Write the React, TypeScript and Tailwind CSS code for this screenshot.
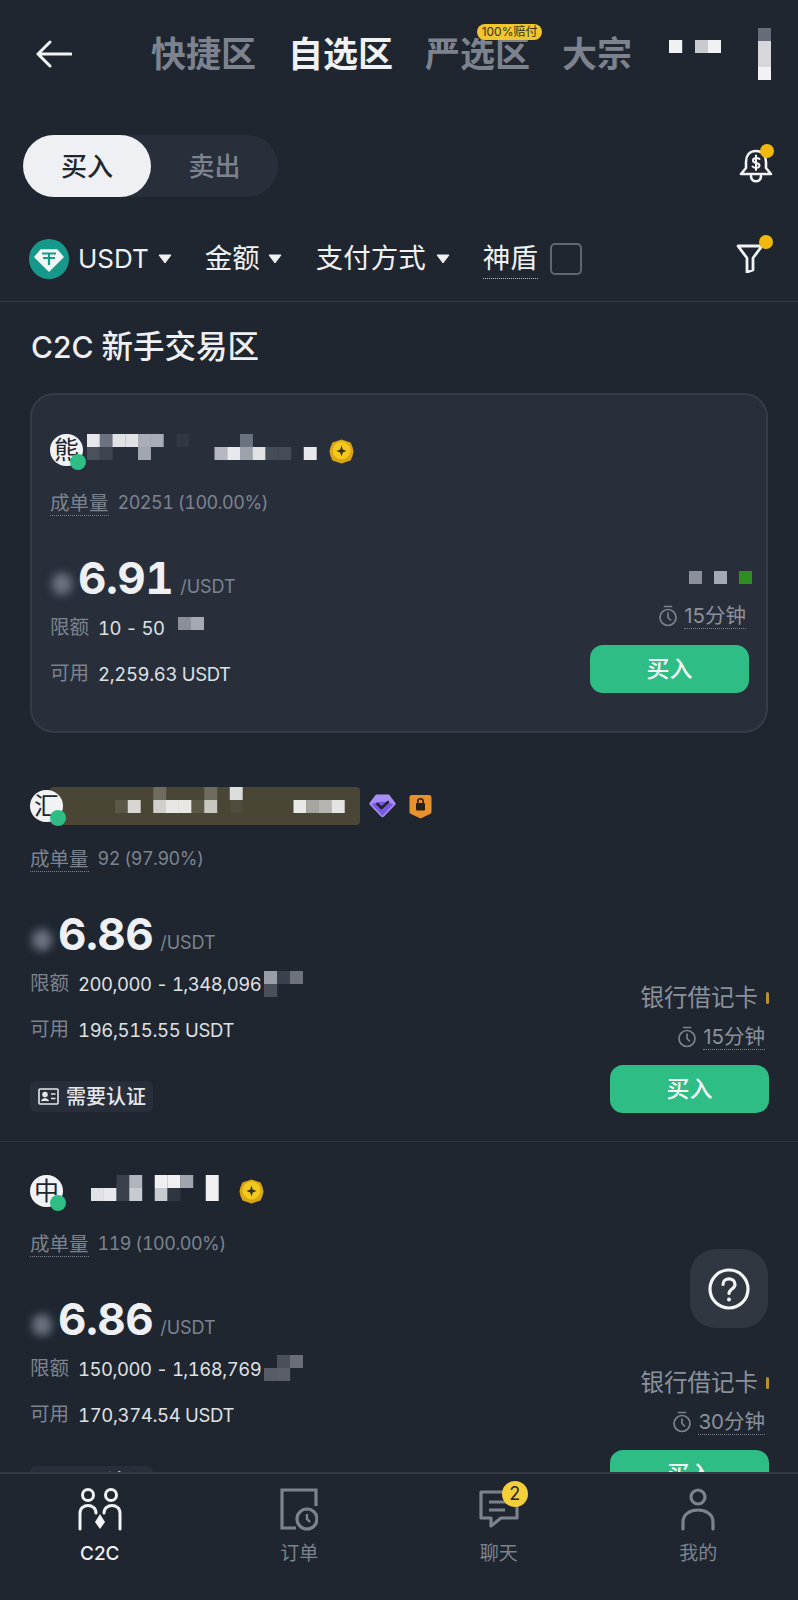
import React from "react";

type Cell = [number, number, string];

function Mosaic({ cols, rows, cells, w = 13, h = 13 }: { cols: number; rows: number; cells: Cell[]; w?: number; h?: number }) {
  return (
    <svg width={cols * w} height={rows * h} viewBox={`0 0 ${cols * w} ${rows * h}`} className="shrink-0 block">
      {cells.map(([x, y, c], i) => (
        <rect key={i} x={x * w} y={y * h} width={w + 0.2} height={h} fill={c} />
      ))}
    </svg>
  );
}

function Avatar({ ch }: { ch: string }) {
  return (
    <div className="relative z-10 w-[33px] h-[32px] shrink-0 rounded-full bg-[#f1f2f4] flex items-center justify-center">
      <span className="text-[25px] leading-none text-[#1e2530]">{ch}</span>
      <span className="absolute right-[-3px] bottom-[-4px] w-[16px] h-[16px] rounded-full bg-[#2ebd85]" />
    </div>
  );
}

function GoldBadge() {
  return (
    <svg width="25" height="25" viewBox="0 0 25 25" className="shrink-0">
      <polygon points="12.5,0.5 17,2 21.5,3.5 23.5,8 24.5,12.5 23.5,17 21.5,21.5 17,23 12.5,24.5 8,23 3.5,21.5 1.5,17 0.5,12.5 1.5,8 3.5,3.5 8,2" fill="#d9a514" />
      <circle cx="12.5" cy="11.5" r="9" fill="#f4c91f" />
      <path d="M12.5 6.5 L13.8 10.4 L17.5 12 L13.8 13.6 L12.5 17.5 L11.2 13.6 L7.5 12 L11.2 10.4 Z" fill="#3b3520" />
    </svg>
  );
}

function PurpleBadge() {
  return (
    <svg width="29" height="26" viewBox="0 0 29 26" className="shrink-0">
      <path d="M8 1.500 H21 L27.500 10 Q28 11 27 12 L16 23.500 Q14.500 25 13 23.500 L2 12 Q1 11 1.500 10 Z" fill="#a98ef8" />
      <path d="M3.500 11 Q14.500 6 25.500 11 L14.500 23 Z" fill="#7a58e6" />
      <path d="M9.500 11 L13.500 15 L20 9" fill="none" stroke="#1f2630" strokeWidth="2.600" strokeLinecap="round" strokeLinejoin="round" />
    </svg>
  );
}

function LockBadge() {
  return (
    <svg width="23" height="25" viewBox="0 0 23 25" className="shrink-0">
      <path d="M3 1 H20 Q22.500 1 22.500 3.500 V18 Q22.500 19.500 21 20 L11.500 24.500 L2 20 Q0.500 19.500 0.500 18 V3.500 Q0.500 1 3 1 Z" fill="#e8912d" />
      <rect x="7" y="9" width="9" height="7.500" rx="1" fill="#2a2118" />
      <path d="M8.800 9 V7.500 a2.700 2.700 0 0 1 5.400 0 V9" fill="none" stroke="#2a2118" strokeWidth="1.600" />
    </svg>
  );
}

function Clock({ size = 20 }: { size?: number }) {
  return (
    <svg width={size} height={size + 2} viewBox="0 0 20 22" fill="none" stroke="#7d838e" strokeWidth="1.700" strokeLinecap="round" className="shrink-0">
      <circle cx="10" cy="12.500" r="8" />
      <path d="M6.500 1.500 H13.500" />
      <path d="M10 8 V12.500 L12.500 15" />
    </svg>
  );
}

function BuyButton({ w }: { w: string }) {
  return (
    <div className={`${w} h-[48px] rounded-[13px] bg-[#2ebd85] flex items-center justify-center text-[23px] font-medium text-[#f4f6f5]`}>
      买入
    </div>
  );
}

function TimeRow({ t, mr }: { t: string; mr: string }) {
  return (
    <div className={`flex items-center gap-[6px] h-[26px] ${mr}`}>
      <Clock />
      <span className="text-[20.5px] leading-[25px] h-[26px] text-[#8b919b] border-b border-dotted border-[#7d838e]">{t}</span>
    </div>
  );
}

function Tag() {
  return (
    <div className="mt-[39px] w-[123px] h-[31px] rounded-[6px] bg-[#282f3b] flex items-center pl-[8px] gap-[7px]">
      <svg width="21" height="17" viewBox="0 0 21 17" fill="none" stroke="#e5e7eb" strokeWidth="1.600" className="shrink-0">
        <rect x="1" y="1" width="19" height="15" rx="1" />
        <circle cx="7" cy="6.500" r="2" fill="#e5e7eb" />
        <path d="M3.500 13 Q7 8.500 10.500 13" fill="#e5e7eb" />
        <path d="M13 6 H17.500 M13 10.500 H17.500" />
      </svg>
      <span className="text-[20px] leading-none font-medium text-[#e5e7eb] whitespace-nowrap">需要认证</span>
    </div>
  );
}

type LeftProps = {
  head: React.ReactNode;
  stats: string;
  price: string;
  limit: React.ReactNode;
  avail: string;
  tag?: boolean;
};

function Left({ head, stats, price, limit, avail, tag }: LeftProps) {
  return (
    <div className="flex flex-col">
      <div className="flex h-[32px]">{head}</div>
      <div className="mt-[25px] h-[25px] flex items-start gap-[9px] text-[#7d838e]">
        <span className="text-[19.5px] leading-[24px] h-[25px] border-b border-dotted border-[#7d838e]">成单量</span>
        <span className="text-[18px] leading-[24px] tabular-nums tracking-[-0.5px]">{stats}</span>
      </div>
      <div className="mt-[38px] h-[48px] flex items-center">
        <span className="ml-[2px] w-[20px] h-[22px] mt-[12px] mr-[6px] rounded-full bg-[#6d7280] blur-[4px]" />
        <span className="text-[44px] leading-none font-bold text-[#eef0f3] tracking-[-0.5px] tabular-nums">{price}</span>
        <span className="ml-[7px] mt-[17px] text-[18px] leading-none text-[#7d838e]">/USDT</span>
      </div>
      <div className="mt-[14px] h-[24px] flex items-center">
        <span className="text-[19.5px] leading-none text-[#7d838e] w-[48px]">限额</span>
        {limit}
      </div>
      <div className="mt-[22px] h-[24px] flex items-center">
        <span className="text-[19.5px] leading-none text-[#7d838e] w-[48px]">可用</span>
        <span className="text-[18.5px] leading-none text-[#dfe1e5] tabular-nums tracking-[-0.35px]">{avail}</span>
      </div>
      {tag && <Tag />}
    </div>
  );
}

function PayRight({ t }: { t: string }) {
  return (
    <div className="flex flex-col items-end -mb-[1px]">
      <div className="h-[24px] flex items-center gap-[8px]">
        <span className="text-[23.5px] leading-none text-[#8b919b]">银行借记卡</span>
        <span className="w-[3px] h-[12px] rounded-full bg-[#b5952a]" />
      </div>
      <div className="mt-[14px]">
        <TimeRow t={t} mr="mr-[4px]" />
      </div>
      <div className="mt-[15px]">
        <BuyButton w="w-[159px]" />
      </div>
    </div>
  );
}

function LimitText({ t }: { t: string }) {
  return <span className="text-[18.5px] leading-none text-[#dfe1e5] whitespace-nowrap tabular-nums tracking-[-0.5px]">{t}</span>;
}

function Tether() {
  return (
    <svg width="40" height="40" viewBox="0 0 40 40" className="shrink-0">
      <circle cx="20" cy="20" r="20" fill="#16998a" />
      <path d="M12 11 H28 L34 18 L20 32 L6 18 Z" fill="#f2f5f4" strokeLinejoin="round" stroke="#f2f5f4" strokeWidth="1.500" />
      <path d="M13 14.500 H27 M20 14.500 V26 M14 19 H26" fill="none" stroke="#16998a" strokeWidth="2.200" />
    </svg>
  );
}

function Caret() {
  return (
    <svg width="14" height="10" viewBox="0 0 14 10" className="shrink-0">
      <path d="M1 1 H13 L7 9 Z" fill="#f0f1f3" stroke="#f0f1f3" strokeLinejoin="round" />
    </svg>
  );
}

function NavItem({ label, active, icon }: { label: string; active?: boolean; icon: React.ReactNode }) {
  return (
    <div className="flex-1 flex flex-col items-center pt-[13px]">
      <div className="h-[44px] flex items-center justify-center">{icon}</div>
      <span className={`mt-[11px] text-[19px] leading-[24px] ${active ? "text-[#eef0f3] font-medium" : "text-[#7d838e]"}`}>{label}</span>
    </div>
  );
}

export default function App() {
  return (
    <div className="relative w-[798px] h-[1600px] overflow-hidden flex flex-col bg-[#1f2630] font-[Inter,'Noto_Sans_CJK_SC',sans-serif]">
      {/* header tabs */}
      <div className="h-[108px] shrink-0 flex items-center pl-[36px]">
        <svg width="36" height="28" viewBox="0 0 36 28" fill="none" stroke="#f2f3f5" strokeWidth="3" strokeLinecap="round" strokeLinejoin="round" className="shrink-0">
          <path d="M2 14 H35 M14 2 L2 14 L14 26" />
        </svg>
        <div className="ml-[79px] flex items-center gap-[32px] text-[35px] leading-none font-semibold text-[#7d838e] whitespace-nowrap">
          <span>快捷区</span>
          <span className="text-[#f0f1f3]">自选区</span>
          <span className="relative">
            严选区
            <span className="absolute left-[52px] top-[-13px] w-[65px] h-[16px] rounded-full bg-[#f0c52e] text-[#3a3216] text-[12px] leading-[16px] font-normal text-center">100%赔付</span>
          </span>
          <span>大宗</span>
        </div>
        <div className="ml-[37px] -mt-[16px]">
          <Mosaic cols={4} rows={1} cells={[[0, 0, "#f0f1f3"], [2, 0, "#c8cad0"], [3, 0, "#f0f1f3"]]} />
        </div>
        <div className="ml-[37px]">
          <Mosaic cols={1} rows={4} cells={[[0, 0, "#666c78"], [0, 1, "#d5d7db"], [0, 2, "#d5d7db"], [0, 3, "#f2f2f4"]]} />
        </div>
      </div>

      {/* buy sell toggle */}
      <div className="mt-[27px] h-[62px] shrink-0 flex items-center justify-between pl-[23px] pr-[25px]">
        <div className="flex w-[255px] h-[62px] rounded-full bg-[#282f3b]">
          <div className="w-[128px] h-[62px] rounded-full bg-[#eef0f3] flex items-center justify-center text-[26px] font-medium text-[#1f2630]">买入</div>
          <div className="flex-1 flex items-center justify-center text-[26px] font-medium text-[#7d838e]">卖出</div>
        </div>
        <div className="relative w-[34px] h-[34px]">
          <svg width="34" height="34" viewBox="0 0 34 34" fill="none" stroke="#f2f3f5" strokeWidth="2.600" strokeLinejoin="round" strokeLinecap="round">
            <path d="M17 2 C10 2 7 7 7 13 V19 L2 25 H32 L27 19 V13 C27 7 24 2 17 2 Z" />
            <path d="M12 27 C12 34 22 34 22 27" />
            <path d="M20.500 10 C19 8.500 14 8.500 14 11.500 C14 15 20.500 13 20.500 16.500 C20.500 19.500 15 19.500 13.500 17.500 M17 6.500 V21" strokeWidth="2" />
          </svg>
          <span className="absolute right-[-1px] top-[-5px] w-[14px] h-[14px] rounded-full bg-[#f0b90b]" />
        </div>
      </div>

      {/* filter row */}
      <div className="shrink-0 h-[105px] pt-[42px] pl-[29px] pr-[34px] flex items-start justify-between border-b border-[#343b47]">
        <div className="flex items-center h-[40px] text-[27.5px] leading-none text-[#f0f1f3] whitespace-nowrap">
          <Tether />
          <span className="ml-[9px] text-[26px]">USDT</span>
          <span className="ml-[9px]"><Caret /></span>
          <span className="ml-[33px]">金额</span>
          <span className="ml-[8px]"><Caret /></span>
          <span className="ml-[34px]">支付方式</span>
          <span className="ml-[10px]"><Caret /></span>
          <span className="ml-[33px] h-[40px] leading-[38px] border-b border-dotted border-[#b8bcc4]">神盾</span>
          <span className="ml-[12px] w-[32px] h-[32px] rounded-[5px] border-2 border-[#5f6672]" />
        </div>
        <div className="relative w-[28px] h-[29px] mt-[5px]">
          <svg width="28" height="29" viewBox="0 0 28 29" fill="none" stroke="#f2f3f5" strokeWidth="2.800" strokeLinejoin="round">
            <path d="M2 2 H26 L17 14 V26 L11 28 V14 Z" />
          </svg>
          <span className="absolute right-[-9px] top-[-9px] w-[14px] h-[14px] rounded-full bg-[#f0b90b]" />
        </div>
      </div>

      {/* list */}
      <div className="flex-1 min-h-0 overflow-hidden">
        <h2 className="mt-[25px] h-[40px] pl-[31px] flex items-center gap-[8px] text-[30px] leading-none font-medium text-[#eef0f3]">
          <span>C2C</span>
          <span className="text-[31.5px]">新手交易区</span>
        </h2>

        <div className="mt-[26px] mx-[30px] h-[340px] rounded-[24px] bg-[#282f3b] border-2 border-[#353c48] pl-[18px] pr-[17px] pt-[40px] pb-[45px] flex justify-between items-end">
          <Left
            head={
              <>
                <Avatar ch="熊" />
                <div className="ml-[4px]">
                  <Mosaic
                    cols={18}
                    rows={2}
                    w={12.75}
                    cells={[
                      [0, 0, "#e5e7eb"], [1, 0, "#6b7280"], [2, 0, "#e0e2e6"], [3, 0, "#e0e2e6"], [4, 0, "#a8adb6"], [5, 0, "#a8adb6"],
                      [7, 0, "#313843"], [12, 0, "#6b7280"],
                      [0, 1, "#4a505c"], [1, 1, "#3e4450"], [4, 1, "#a0a5ae"],
                      [10, 1, "#b5b8c0"], [11, 1, "#e8e9ec"], [12, 1, "#9ea2ab"], [13, 1, "#e0e2e6"], [14, 1, "#454b57"], [15, 1, "#454b57"], [17, 1, "#e8e9ec"],
                    ]}
                  />
                </div>
                <div className="ml-[12px] self-center mt-[2px]">
                  <GoldBadge />
                </div>
              </>
            }
            stats="20251 (100.00%)"
            price="6.91"
            limit={
              <div className="flex items-center h-[24px]">
                <LimitText t="10 - 50" />
                <div className="ml-[14px] self-start mt-[1px]">
                  <Mosaic cols={2} rows={1} cells={[[0, 0, "#8a8f98"], [1, 0, "#a5a9b1"]]} />
                </div>
              </div>
            }
            avail="2,259.63 USDT"
          />
          <div className="flex flex-col items-end -mb-[7px]">
            <div className="flex gap-[12px] -mr-[3px]">
              <span className="w-[13px] h-[13px] bg-[#8a8f9a]" />
              <span className="w-[13px] h-[13px] bg-[#a5a9b3]" />
              <span className="w-[13px] h-[13px] bg-[#2f8f1e]" />
            </div>
            <div className="mt-[19px]">
              <TimeRow t="15分钟" mr="mr-[3px]" />
            </div>
            <div className="mt-[16px]">
              <BuyButton w="w-[159px]" />
            </div>
          </div>
        </div>

        <div className="mt-[57px] pl-[30px] pr-[29px] pb-[29px] flex justify-between items-end border-b border-[#2a313c]">
          <Left
            head={
              <div className="flex items-center h-[32px]">
                <Avatar ch="汇" />
                <div className="-ml-[13px] w-[310px] h-[38px] rounded-[4px] bg-[#4a4636] pl-[65px] shrink-0">
                  <Mosaic
                    cols={18}
                    rows={2}
                    w={12.75}
                    cells={[
                      [3, 0, "#6e6b5f"], [7, 0, "#6e6b5f"], [9, 0, "#dcdcda"],
                      [0, 1, "#5c5848"], [1, 1, "#d8d6d0"], [3, 1, "#d0cfc9"], [4, 1, "#e8e7e3"], [5, 1, "#e8e7e3"], [6, 1, "#5c5848"], [7, 1, "#c8c7c0"], [9, 1, "#4f4c3e"],
                      [14, 1, "#e8e8e6"], [15, 1, "#a6a59f"], [16, 1, "#b5b4ae"], [17, 1, "#e4e4e2"],
                    ]}
                  />
                </div>
                <div className="ml-[8px]"><PurpleBadge /></div>
                <div className="ml-[12px]"><LockBadge /></div>
              </div>
            }
            stats="92 (97.90%)"
            price="6.86"
            limit={
              <div className="flex items-center h-[24px]">
                <LimitText t="200,000 - 1,348,096" />
                <div className="ml-[3px]">
                  <Mosaic cols={3} rows={2} cells={[[0, 0, "#9a9ea6"], [1, 0, "#3a404c"], [2, 0, "#6e727c"], [0, 1, "#4a505a"]]} />
                </div>
              </div>
            }
            avail="196,515.55 USDT"
            tag
          />
          <PayRight t="15分钟" />
        </div>

        <div className="pt-[33px] pl-[30px] pr-[29px] flex justify-between items-end">
          <Left
            head={
              <>
                <Avatar ch="中" />
                <div className="ml-[28px]">
                  <Mosaic
                    cols={10}
                    rows={2}
                    w={12.75}
                    cells={[
                      [2, 0, "#3a404c"], [3, 0, "#b0b4bb"], [5, 0, "#f0f0f2"], [6, 0, "#f0f0f2"], [7, 0, "#a0a4ac"], [9, 0, "#f0f0f2"],
                      [0, 1, "#e0e2e6"], [1, 1, "#e8e9ec"], [2, 1, "#3a404c"], [3, 1, "#c8cbd0"], [5, 1, "#c8cbd0"], [6, 1, "#30363f"], [9, 1, "#f0f0f2"],
                    ]}
                  />
                </div>
                <div className="ml-[20px] self-center">
                  <GoldBadge />
                </div>
              </>
            }
            stats="119 (100.00%)"
            price="6.86"
            limit={
              <div className="flex items-center h-[24px]">
                <LimitText t="150,000 - 1,168,769" />
                <div className="ml-[3px] -mt-[2px]">
                  <Mosaic cols={3} rows={2} cells={[[1, 0, "#4a4f5a"], [2, 0, "#6a6e78"], [0, 1, "#585c66"], [1, 1, "#5a5e68"]]} />
                </div>
              </div>
            }
            avail="170,374.54 USDT"
            tag
          />
          <PayRight t="30分钟" />
        </div>
      </div>

      {/* bottom nav */}
      <div className="shrink-0 h-[128px] flex bg-[#1f2630] border-t-2 border-[#343b47]">
        <NavItem
          label="C2C"
          active
          icon={
            <svg width="44" height="43" viewBox="0 0 44 43" fill="none" stroke="#f2f3f5" strokeWidth="3" strokeLinecap="round">
              <circle cx="10" cy="7" r="5.500" />
              <circle cx="33" cy="7" r="5.500" />
              <path d="M2 41 V25 C2 15 18 15 18 25" />
              <path d="M42 41 V25 C42 15 26 15 26 25" />
              <path d="M22 26 L27 34 L22 41 L17 34 Z" fill="#f2f3f5" stroke="none" />
            </svg>
          }
        />
        <NavItem
          label="订单"
          icon={
            <svg width="38" height="43" viewBox="0 0 38 43" fill="none" stroke="#7d838e" strokeWidth="3.200">
              <path d="M16 40 H2 V2 H36 V18" />
              <circle cx="27" cy="31" r="10" />
              <path d="M27 26 V31 L30 34" strokeWidth="2.400" />
            </svg>
          }
        />
        <NavItem
          label="聊天"
          icon={
            <div className="relative w-[40px] h-[38px]">
              <svg width="40" height="38" viewBox="0 0 40 38" fill="none" stroke="#7d838e" strokeWidth="3.200" strokeLinejoin="round">
                <path d="M2 2 H38 V28 H22 L12 36 V28 H2 Z" />
                <path d="M10 12 H30 M10 20 H26" />
              </svg>
              <span className="absolute right-[-9px] top-[-9px] w-[26px] h-[26px] rounded-full bg-[#f5cf3a] text-[#1f2630] text-[18px] leading-[26px] text-center">2</span>
            </div>
          }
        />
        <NavItem
          label="我的"
          icon={
            <svg width="34" height="43" viewBox="0 0 34 43" fill="none" stroke="#7d838e" strokeWidth="3.200" strokeLinecap="round">
              <circle cx="17" cy="9" r="7" />
              <path d="M2 41 V34 C2 18 32 18 32 34 V41" />
            </svg>
          }
        />
      </div>

      {/* floating help */}
      <div className="absolute left-[690px] top-[1249px] w-[78px] h-[79px] rounded-[26px] bg-[#303741] flex items-center justify-center">
        <svg width="42" height="42" viewBox="0 0 42 42" fill="none" stroke="#f4f5f6" strokeWidth="3.200" strokeLinecap="round">
          <circle cx="21" cy="21" r="19" />
          <path d="M15 16.500 C15 9 27 9 27 16.500 C27 21 21 21 21 25.500" />
          <circle cx="21" cy="31.500" r="1" fill="#f4f5f6" strokeWidth="2" />
        </svg>
      </div>
    </div>
  );
}
